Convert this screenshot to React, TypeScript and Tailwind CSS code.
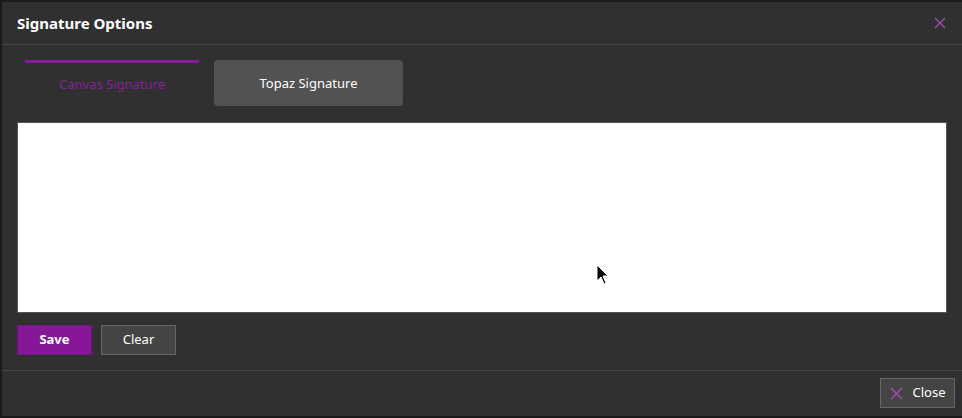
import React from "react";

const font = { fontFamily: '"Segoe UI", "Noto Sans", "Open Sans", sans-serif' };

function XIcon({ className }: { className?: string }) {
  return (
    <svg viewBox="0 0 12 12" className={className} fill="none" stroke="currentColor" strokeWidth="1.4">
      <path d="M1 1 L11 11 M11 1 L1 11" />
    </svg>
  );
}

export default function App() {
  return (
    <div className="w-[962px] h-[418px] bg-[#1b1b1b] overflow-hidden pt-[2px] pl-[2px]" style={font}>
      <div className="w-[962px] h-[414px] bg-[#303030] flex flex-col">
        <div className="h-[43px] flex items-center justify-between pl-[15px] pr-[18px] border-b border-[#464646] shrink-0">
          <span className="text-white font-bold text-[15px]">Signature Options</span>
          <XIcon className="w-[12px] h-[12px] text-[#a04cb4]" />
        </div>
        <div className="flex flex-col px-[15px] pt-[15px] pb-[15px] border-b border-[#464646]">
          <div className="flex gap-[15px] ml-[8px]">
            <div className="w-[174px] h-[46px] border-t-[3px] border-[#8a1a9e] flex items-center justify-center text-[13px] text-[#84209a]">
              Canvas Signature
            </div>
            <div className="w-[189px] h-[46px] pt-[2px] bg-[#525252] rounded-[4px] flex items-center justify-center text-[13px] text-white">
              Topaz Signature
            </div>
          </div>
          <div className="relative mt-[16px] h-[191px] w-[930px] bg-white border border-[#555555]">
            <svg className="absolute left-[578px] top-[141px]" width="14" height="22" viewBox="0 0 14 22">
              <path d="M1 1 L1 17 L5 13 L8 20 L10 19 L7 12 L12 12 Z" fill="#000" stroke="#fff" strokeWidth="1" />
            </svg>
          </div>
          <div className="flex gap-[9px] mt-[12px]">
            <button className="w-[75px] h-[30px] bg-[#861796] border border-[#6e1380] text-white font-bold text-[13px]">
              Save
            </button>
            <button className="w-[75px] h-[30px] bg-[#444444] border border-[#666666] text-white text-[13px]">
              Clear
            </button>
          </div>
        </div>
        <div className="flex-1 flex items-start justify-end pt-[7px] pr-[9px]">
          <button className="w-[75px] h-[30px] bg-[#444444] border border-[#666666] text-white text-[13px] flex items-center justify-center gap-[10px]">
            <XIcon className="w-[13px] h-[13px] text-[#a04cb4]" />
            <span>Close</span>
          </button>
        </div>
      </div>
    </div>
  );
}
